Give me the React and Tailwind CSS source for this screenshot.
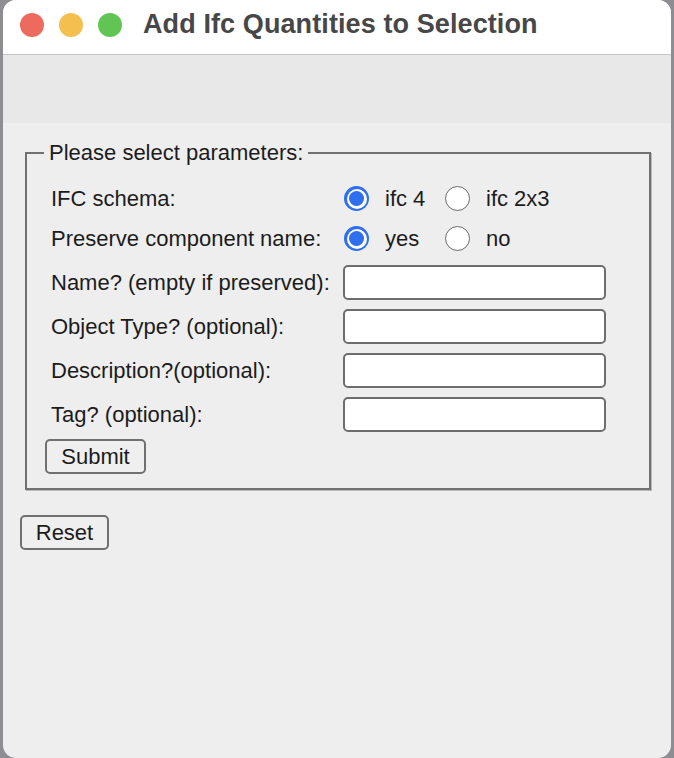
import { useState } from "react";

const Radio = ({ checked, onClick }) =>
  checked ? (
    <button
      onClick={onClick}
      className="w-[25px] h-[25px] rounded-full bg-[#2f6fee] flex items-center justify-center shrink-0"
    >
      <span className="w-[20px] h-[20px] rounded-full bg-white flex items-center justify-center">
        <span className="w-[15px] h-[15px] rounded-full bg-[#2f6fee]" />
      </span>
    </button>
  ) : (
    <button
      onClick={onClick}
      className="w-[25px] h-[25px] rounded-full bg-white border-[1.5px] border-[#6b6b6b] shrink-0"
    />
  );

const RadioRow = ({ label, options, value, setValue }) => (
  <div className="flex items-center h-[35px]">
    <div className="w-[292px] shrink-0">{label}</div>
    {options.map((opt) => (
      <div key={opt} className="flex items-center w-[101px] shrink-0 pl-[1px]">
        <Radio checked={value === opt} onClick={() => setValue(opt)} />
        <span className="ml-[16px] whitespace-nowrap">{opt}</span>
      </div>
    ))}
  </div>
);

const InputRow = ({ label }) => (
  <div className="flex items-center h-[35px] mt-[9px]">
    <div className="w-[292px] shrink-0">{label}</div>
    <input className="w-[263px] h-[35px] bg-white border-2 border-[#6d6d6d] rounded-[5px] outline-none px-2" />
  </div>
);

export default function App() {
  const [schema, setSchema] = useState("ifc 4");
  const [preserve, setPreserve] = useState("yes");

  return (
    <div className="w-[674px] h-[758px] bg-[#8e8e92] pl-[3px] font-['Liberation_Sans',Arial,sans-serif] text-[#1c1c1c] text-[22px] overflow-hidden">
      <div className="w-[668px] h-[758px] rounded-[13px] overflow-hidden flex flex-col bg-[#eeeeee]">
        {/* Title bar */}
        <div className="h-[55px] bg-white border-b border-[#c4c4c4] flex items-center pl-[17px] shrink-0">
          <div className="flex items-center gap-[15px] -mt-[4px]">
            <span className="w-[24px] h-[24px] rounded-full bg-[#ec6a5e]" />
            <span className="w-[24px] h-[24px] rounded-full bg-[#f4bf4f]" />
            <span className="w-[24px] h-[24px] rounded-full bg-[#61c554]" />
          </div>
          <h1 className="ml-[21px] -mt-[5px] text-[27px] font-bold text-[#474747] tracking-[0.1px]">
            Add Ifc Quantities to Selection
          </h1>
        </div>

        {/* Toolbar */}
        <div className="h-[68px] bg-[#e8e8e8] shrink-0" />

        {/* Content */}
        <div className="flex-1">
          <fieldset className="ml-[22px] mt-[18px] w-[626px] border-2 border-[#707070] shadow-[1px_1px_0_#b9b9b9] pl-[24px] pt-[16px] pb-[14px]">
            <legend className="-ml-[7px] px-[5px] leading-[24px]">
              Please select parameters:
            </legend>
            <RadioRow
              label="IFC schema:"
              options={["ifc 4", "ifc 2x3"]}
              value={schema}
              setValue={setSchema}
            />
            <div className="mt-[5px]">
              <RadioRow
                label="Preserve component name:"
                options={["yes", "no"]}
                value={preserve}
                setValue={setPreserve}
              />
            </div>
            <InputRow label="Name? (empty if preserved):" />
            <InputRow label="Object Type? (optional):" />
            <InputRow label="Description?(optional):" />
            <InputRow label="Tag? (optional):" />
            <button className="mt-[7px] -ml-[6px] w-[101px] h-[35px] bg-[#efefef] border-2 border-[#707070] rounded-[5px] leading-none">
              Submit
            </button>
          </fieldset>

          <button className="mt-[25px] ml-[17px] w-[89px] h-[35px] bg-[#efefef] border-2 border-[#707070] rounded-[5px] leading-none">
            Reset
          </button>
        </div>
      </div>
    </div>
  );
}
